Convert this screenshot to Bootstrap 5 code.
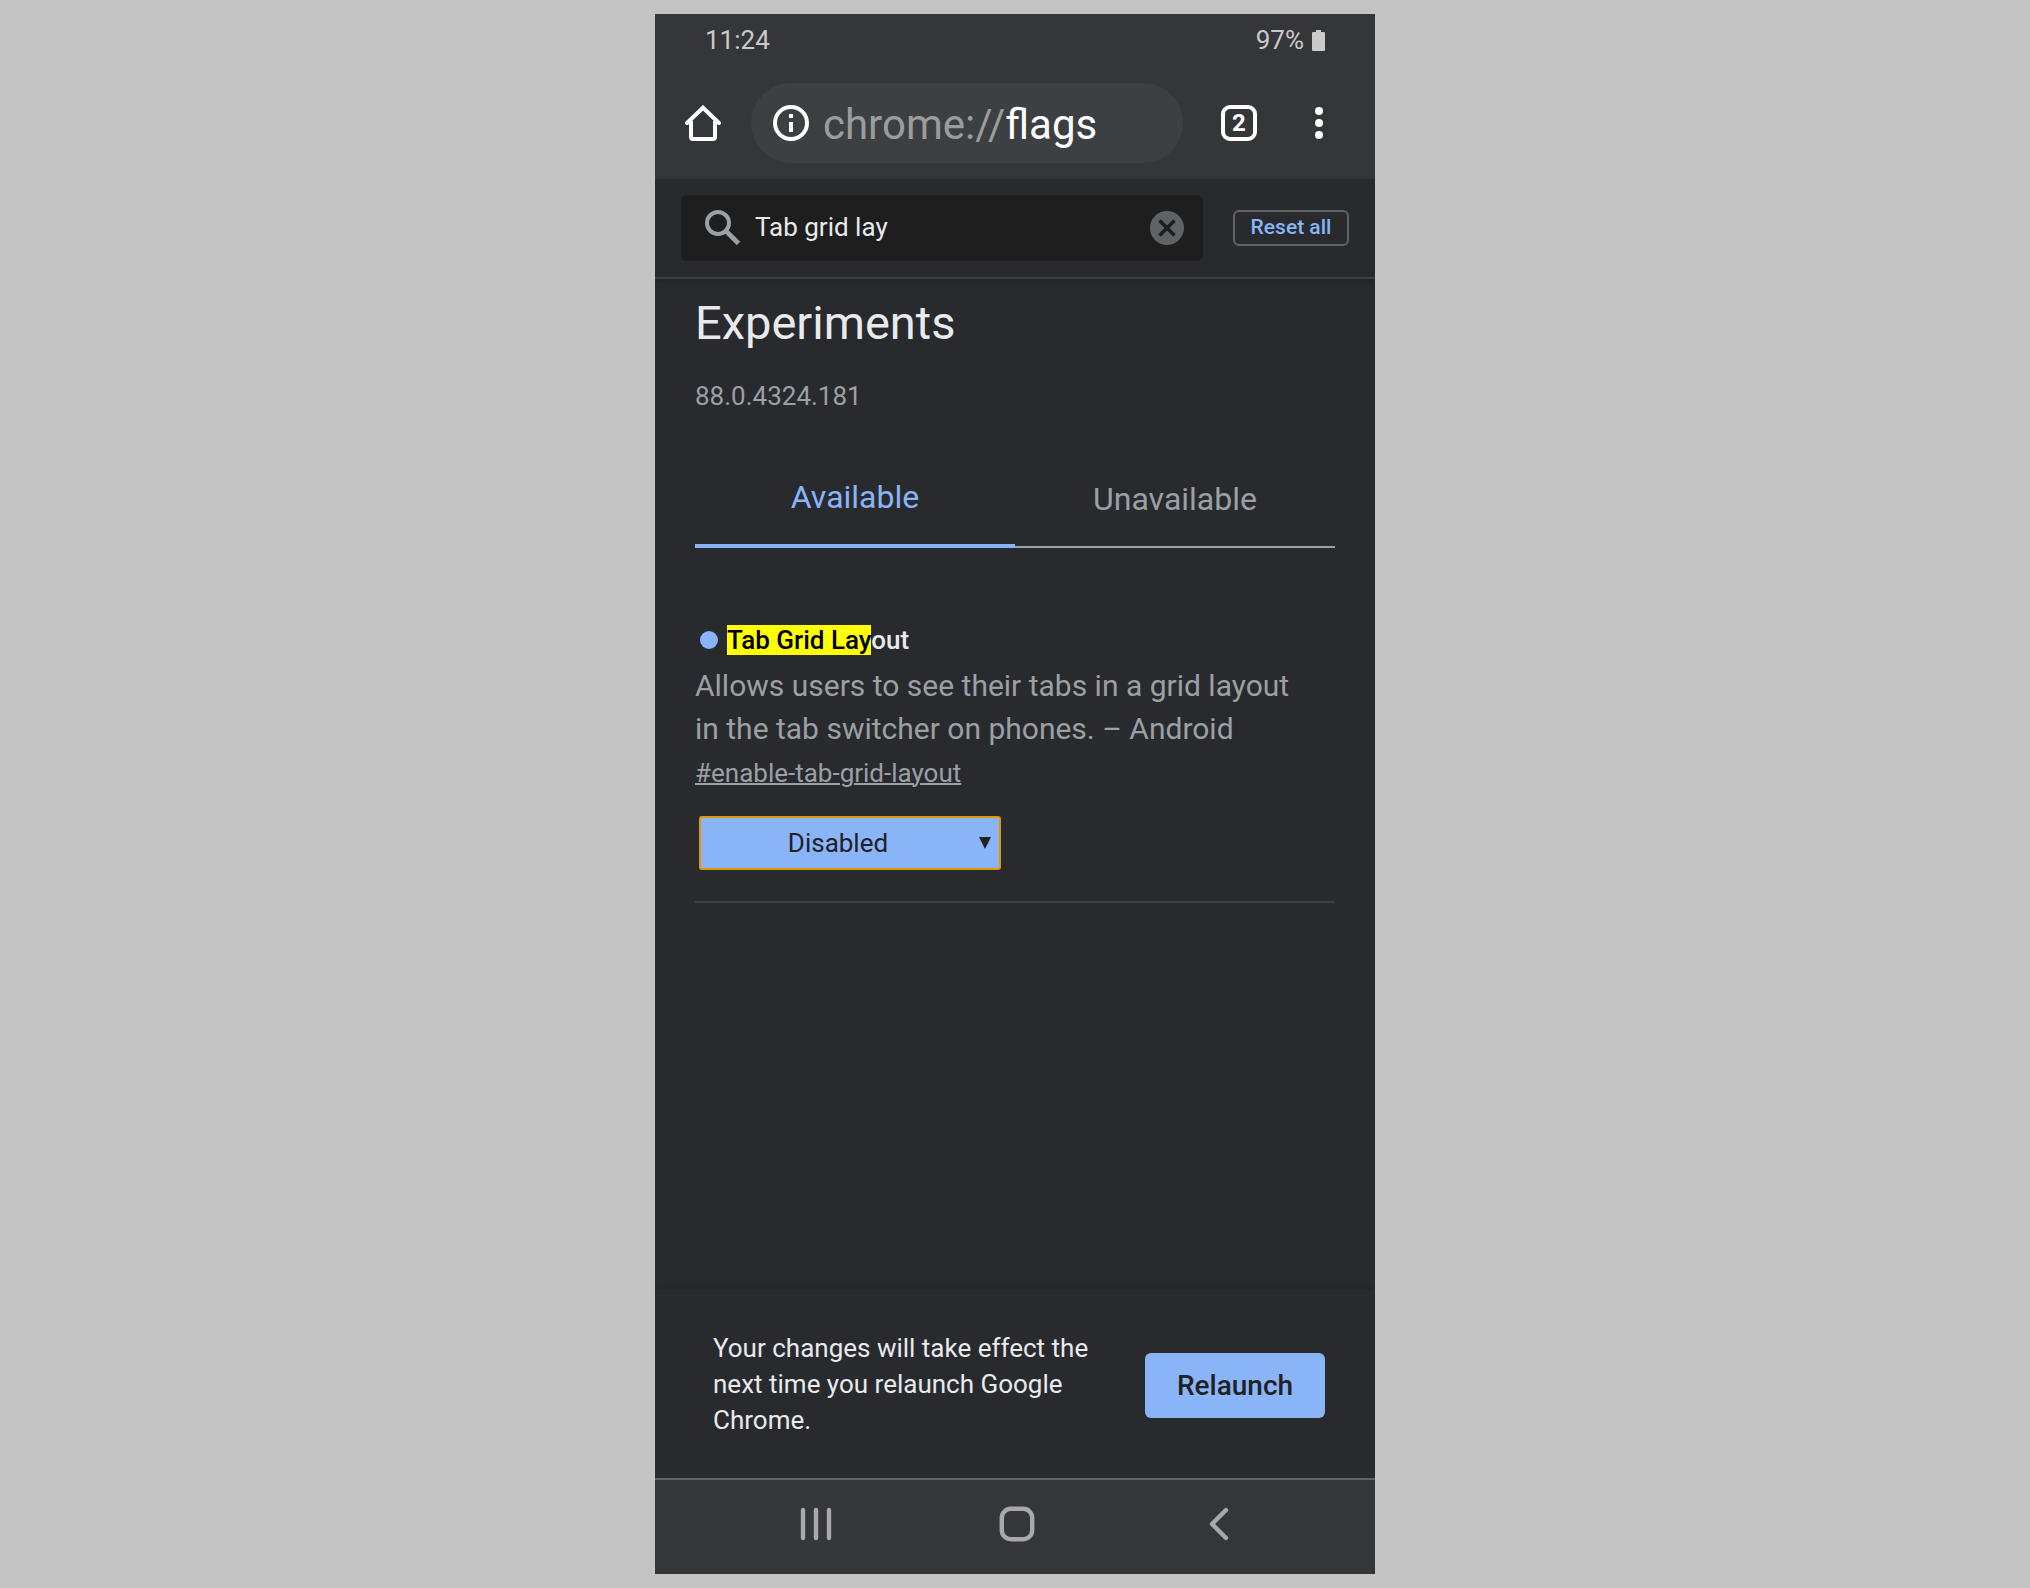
<!DOCTYPE html>
<html lang="en" data-bs-theme="dark">
<head>
<meta charset="utf-8">
<meta name="viewport" content="width=device-width, initial-scale=1">
<title>Experiments</title>
<link rel="stylesheet" href="https://cdn.jsdelivr.net/npm/bootstrap@5.3.0/dist/css/bootstrap.min.css">
<style>
  body { background: #c3c3c3; font-family: Roboto, "Liberation Sans", sans-serif; font-size: 26px; line-height: 36px; color: #e8eaed; }
  svg { display: block; flex: none; }
  .phone { max-width: 720px; min-height: calc(100vh - 28px); margin: 14px auto; background: #292a2d; color: #e8eaed; }
  .chrome-bar { background: #35363a; }
  .status { padding: 8px 50px 0; color: #cacaca; }
  .toolbar { padding: 25px 44px 16px 30px; }
  .toolbar .btn { --bs-btn-padding-x: 0; --bs-btn-padding-y: 0; --bs-btn-border-width: 0; color: #fff; }
  .omnibox { background: #3c4043; height: 80px; padding: 0 22px; gap: 14px; margin: 0 38px 0 30px; min-width: 0; }
  .address { font-size: 42px; line-height: 50px; padding-top: 4px; color: #9b9c9e; }
  .address b { font-weight: 400; color: #fff; }
  .toolbar .tab-count { width: 36px; height: 36px; border: 4px solid #fff; border-radius: 9px; font-size: 24px; line-height: 28px; font-weight: 700; }
  .menu-btn { margin-left: 50px; }
  .search-row { padding: 16px 26px; gap: 30px; border-bottom: 2px solid #3c4043; box-shadow: 0 2px 6px rgba(0,0,0,.25); }
  .search-box { background: #1e1e1f; height: 66px; border-radius: 6px; padding: 0 19px 0 24px; gap: 14px; }
  .search-box input { font-size: 26px; line-height: 36px; height: 38px; padding: 0 0 2px; color: #e8eaed; }
  .btn-reset { font-size: 21px; line-height: 30px; font-weight: 500; width: 116px; padding: 0 0 2px; color: #8ab4f8; border: 2px solid #5f6368; border-radius: 6px; height: 36px; white-space: nowrap; }
  .content { padding: 16px 40px 0; }
  h1 { font-size: 47px; line-height: 56px; font-weight: 400; margin: 0 0 27px; color: #e8eaed; }
  .muted { color: #9aa0a6; }
  .flag-tabs { margin: 52px 0 74px; }
  .flag-tabs .nav-link { background: none; border: 0; border-bottom: 2px solid #9aa0a6; border-radius: 0; color: #9aa0a6; font-size: 32px; line-height: 40px; padding: 13px 0 27px; }
  .flag-tabs .nav-link.active { color: #8ab4f8; border-bottom: 4px solid #8ab4f8; padding: 11px 0 27px; }
  h2 { font-size: 26px; line-height: 36px; font-weight: 500; margin: 0 0 6px; padding-left: 5px; gap: 9px; color: #e8eaed; }
  h2 mark { background: #ff0; color: #000; padding: 0; }
  .dot { width: 18px; height: 18px; border-radius: 50%; background: #8ab4f8; }
  .desc { font-size: 30px; line-height: 43px; max-width: 610px; margin: 0; }
  .permalink { display: inline-block; margin: 5px 0 25px; text-decoration: underline; text-decoration-thickness: 2px; }
  .select-wrap { width: 302px; margin-left: 4px; }
  .flag-select { width: 100%; height: 54px; appearance: none; background: #8ab4f8; color: #202124; border: 2px solid #e59700; border-radius: 3px; padding: 0 24px 0 0; text-align: center; text-align-last: center; font-size: 26px; line-height: 36px; }
  .select-wrap svg { position: absolute; right: 10px; top: 21px; pointer-events: none; }
  .rule { height: 2px; background: #3c4043; margin-top: 31px; }
  .relaunch { padding: 40px 50px 40px 58px; gap: 40px; box-shadow: 0 -2px 6px rgba(0,0,0,.2); border-bottom: 2px solid #5f6368; }
  .relaunch p { max-width: 392px; }
  .btn-relaunch { width: 180px; height: 65px; margin-top: 3px; background: #8ab4f8; color: #202124; font-size: 28px; line-height: 36px; font-weight: 500; border: 0; border-radius: 6px; }
  .sys-nav { background: #35363a; height: 94px; padding: 0 56px 6px 60px; }
  .sys-nav button { background: none; border: 0; padding: 0; display: flex; justify-content: center; }
</style>
<script src="https://cdn.jsdelivr.net/npm/bootstrap@5.3.0/dist/js/bootstrap.bundle.min.js"></script>
</head>
<body>
<div class="phone d-flex flex-column overflow-hidden">
  <header class="chrome-bar">
    <div class="status d-flex justify-content-between align-items-center">
      <span>11:24</span>
      <span class="d-flex align-items-center gap-2">97%
        <svg width="13" height="21" viewBox="0 0 13 21" fill="#cacaca"><path d="M4 0h5v2h3a1 1 0 0 1 1 1v17a1 1 0 0 1-1 1H1a1 1 0 0 1-1-1V3a1 1 0 0 1 1-1h3z"/></svg>
      </span>
    </div>
    <div class="toolbar d-flex align-items-center">
      <button class="btn" type="button" aria-label="Home">
        <svg width="36" height="36" viewBox="0 0 36 36" fill="none" stroke="#fff" stroke-width="4" stroke-linejoin="round" stroke-linecap="round"><path d="M6 17v15a2 2 0 0 0 2 2h20a2 2 0 0 0 2-2V17"/><path d="M2 18 18 2.700 34 18" stroke-linejoin="miter"/></svg>
      </button>
      <div class="omnibox rounded-pill d-flex align-items-center flex-fill">
        <svg width="36" height="36" viewBox="0 0 36 36"><circle cx="18" cy="18" r="16" fill="none" stroke="#fff" stroke-width="4"/><path d="M16 9h4v4h-4zM16 17h4v10h-4z" fill="#fff"/></svg>
        <span class="address">chrome://<b>flags</b></span>
      </div>
      <button class="btn tab-count" type="button" aria-label="2 open tabs">2</button>
      <button class="btn menu-btn" type="button" aria-label="Menu">
        <svg width="24" height="36" viewBox="0 0 24 36" fill="#fff"><circle cx="12" cy="6" r="4"/><circle cx="12" cy="18" r="4"/><circle cx="12" cy="30" r="4"/></svg>
      </button>
    </div>
  </header>

  <div class="search-row d-flex align-items-center">
    <div class="search-box d-flex align-items-center flex-fill">
      <svg width="36" height="36" viewBox="0 0 36 36" fill="none" stroke="#9aa0a6" stroke-width="4"><circle cx="13" cy="13" r="11"/><path d="m21 21 12.500 12.500" stroke-width="4.600"/></svg>
      <input class="form-control-plaintext flex-fill" type="text" value="Tab grid lay" aria-label="Search flags">
      <button class="btn p-0 border-0" type="button" aria-label="Clear search">
        <svg width="34" height="34" viewBox="0 0 34 34"><circle cx="17" cy="17" r="17" fill="#5f6368"/><path d="m9.500 9.500 15 15m0-15-15 15" stroke="#1e1e1f" stroke-width="3.600"/></svg>
      </button>
    </div>
    <button class="btn btn-reset flex-shrink-0" type="button">Reset all</button>
  </div>

  <main class="content flex-fill">
    <h1>Experiments</h1>
    <div class="muted">88.0.4324.181</div>
    <div class="flag-tabs nav nav-justified align-items-end" role="tablist">
      <div class="nav-item"><button class="nav-link active" type="button" role="tab" aria-selected="true">Available</button></div>
      <div class="nav-item"><button class="nav-link" type="button" role="tab" aria-selected="false">Unavailable</button></div>
    </div>
    <section>
      <h2 class="d-flex align-items-center"><span class="dot"></span><span><mark>Tab Grid Lay</mark>out</span></h2>
      <p class="desc muted">Allows users to see their tabs in a grid layout in the tab switcher on phones. – Android</p>
      <a class="permalink muted" href="#enable-tab-grid-layout">#enable-tab-grid-layout</a>
      <div class="select-wrap position-relative">
        <select class="flag-select" aria-label="Tab Grid Layout"><option>Default</option><option>Enabled</option><option selected>Disabled</option></select>
        <svg width="12" height="12" viewBox="0 0 12 12"><path d="M0 0h12L6 12z" fill="#202124"/></svg>
      </div>
      <div class="rule"></div>
    </section>
  </main>

  <div class="relaunch d-flex align-items-center justify-content-between">
    <p class="mb-0">Your changes will take effect the next time you relaunch Google Chrome.</p>
    <button class="btn-relaunch flex-shrink-0" type="button">Relaunch</button>
  </div>

  <nav class="sys-nav d-flex align-items-center" aria-label="System">
    <button class="flex-fill" type="button" aria-label="Recents"><svg width="36" height="36" viewBox="0 0 36 36" stroke="#a9a9ab" stroke-width="4.400" stroke-linecap="round"><path d="M5 4v28M18 4v28M31 4v28"/></svg></button>
    <button class="flex-fill" type="button" aria-label="Home screen"><svg width="36" height="36" viewBox="0 0 36 36" fill="none" stroke="#a9a9ab" stroke-width="4.400"><rect x="2.800" y="2.800" width="30.400" height="30.400" rx="9"/></svg></button>
    <button class="flex-fill" type="button" aria-label="Back"><svg width="36" height="36" viewBox="0 0 36 36" fill="none" stroke="#a9a9ab" stroke-width="4.400" stroke-linecap="round" stroke-linejoin="round"><path d="M26 4 12 18l14 14"/></svg></button>
  </nav>
</div>
</body>
</html>
